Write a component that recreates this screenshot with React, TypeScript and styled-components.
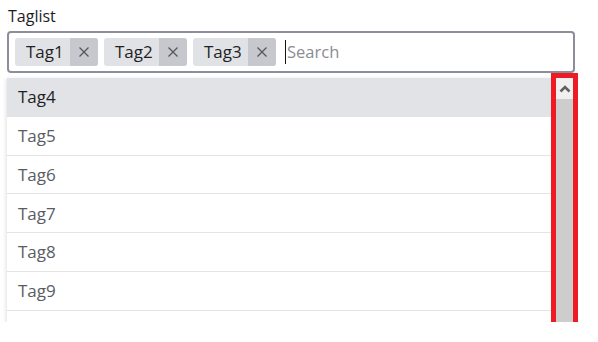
import styled, {createGlobalStyle} from "styled-components";
import React from "react";

const GlobalStyle = createGlobalStyle`
  body {
    margin: 0;
    background: #fff;
    font-family: "Open Sans", "Noto Sans", sans-serif;
  }
`
const Wrapper = styled.div`
  width: 568px;
  padding: 6px 0 0 7px;
`
const Label = styled.label`
  display: block;
  font-size: 16px;
  line-height: 20px;
  color: #1d1d1f;
  padding-left: 1px;
  margin-bottom: 5px;
`
const Field = styled.div`
  box-sizing: border-box;
  height: 42px;
  border: 2px solid #8c8f9b;
  border-radius: 4px;
  display: flex;
  align-items: center;
  gap: 6px;
  padding: 0 6px;
`
const Chip = styled.div`
  display: flex;
  height: 28px;
  border-radius: 3px;
  overflow: hidden;
  background: #e0e2e6;
`
const ChipText = styled.span`
  padding: 0 9px 0 11px;
  font-size: 17px;
  line-height: 28px;
  color: #1f1f24;
  width: 35px;
`
const ChipClose = styled.button`
  width: 28px;
  border: none;
  padding: 0;
  background: #c6c8ce;
  display: flex;
  align-items: center;
  justify-content: center;
  cursor: pointer;
`
const Search = styled.input`
  flex: 1;
  border: none;
  outline: none;
  margin-left: 3px;
  padding: 0 0 0 1px;
  border-left: 1px solid #111;
  font-family: inherit;
  font-size: 16.5px;
  line-height: 24px;
  height: 24px;
  color: #222;

  &::placeholder {
    color: #8a8c94;
  }
`
const Dropdown = styled.div`
  margin-top: 5px;
  width: 566px;
  height: 244px;
  display: flex;
  box-shadow: -1px 1px 4px rgba(0, 0, 0, 0.12);
`
const List = styled.ul`
  flex: 1;
  margin: 0;
  padding: 0;
  list-style: none;
  overflow: hidden;
`
const Row = styled.li<{$active?: boolean}>`
  box-sizing: border-box;
  height: 38.75px;
  padding-left: 11px;
  display: flex;
  align-items: center;
  font-size: 17px;
  color: ${p => p.$active ? "#1f1f24" : "#5a5c63"};
  background: ${p => p.$active ? "#e2e3e7" : "#fff"};
  border-bottom: 1px solid ${p => p.$active ? "#e2e3e7" : "#e4e4e4"};
`
const Scrollbar = styled.div`
  width: 17px;
  background: #cdcdcd;
  outline: 5px solid #ed1c24;
  display: flex;
  flex-direction: column;
`
const ScrollUp = styled.div`
  height: 21px;
  background: #f0f0f0;
  display: flex;
  align-items: center;
  justify-content: center;
`

const tags = ["Tag1", "Tag2", "Tag3"]
const options = ["Tag4", "Tag5", "Tag6", "Tag7", "Tag8", "Tag9"]

export default function App() {
    return <Wrapper>
        <GlobalStyle/>
        <Label>Taglist</Label>
        <Field>
            {tags.map(t => <Chip key={t}>
                <ChipText>{t}</ChipText>
                <ChipClose aria-label={"remove " + t}>
                    <svg width="12" height="12" viewBox="0 0 12 12">
                        <path d="M1.5 1.5 L10.5 10.5 M10.5 1.5 L1.5 10.5" stroke="#55575e" strokeWidth="1.3"/>
                    </svg>
                </ChipClose>
            </Chip>)}
            <Search placeholder="Search"/>
        </Field>
        <Dropdown>
            <List>
                {options.map((o, i) => <Row key={o} $active={i === 0}>{o}</Row>)}
            </List>
            <Scrollbar>
                <ScrollUp>
                    <svg width="12" height="8" viewBox="0 0 12 8">
                        <path d="M1.5 6.5 L6 2 L10.5 6.5" stroke="#606060" strokeWidth="2.6" fill="none"/>
                    </svg>
                </ScrollUp>
            </Scrollbar>
        </Dropdown>
    </Wrapper>
}
